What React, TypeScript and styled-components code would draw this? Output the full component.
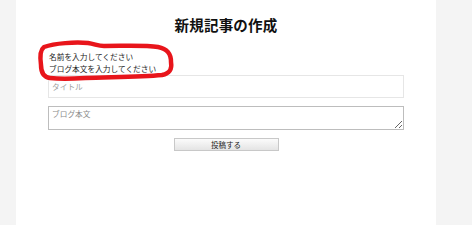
import styled, { createGlobalStyle } from 'styled-components';

const GlobalStyle = createGlobalStyle`
  html, body {
    margin: 0;
    padding: 0;
    background: #ffffff;
  }
  body {
    font-family: "Noto Sans CJK JP", "Noto Sans", sans-serif;
    color: #222;
  }
`;

const PageWrapper = styled.div`
  position: relative;
  display: flex;
  width: 472px;
  height: 225px;
`;

const SideStrip = styled.div<{ $width: number }>`
  width: ${(p) => p.$width}px;
  flex-shrink: 0;
  background: #f4f4f4;
`;

const Main = styled.main`
  width: 420px;
  flex-shrink: 0;
  background: #ffffff;
  display: flex;
  flex-direction: column;
  align-items: center;
  padding-top: 15px;
  box-sizing: border-box;
`;

const Title = styled.h1`
  margin: 0;
  font-size: 14.5px;
  line-height: 20px;
  font-weight: 700;
  color: #111;
  letter-spacing: 0.2px;
`;

const Form = styled.form`
  width: 356px;
  display: flex;
  flex-direction: column;
  margin-top: 16px;
`;

const ErrorList = styled.ul`
  list-style: none;
  margin: 0 0 0 1px;
  padding: 0;
`;

const ErrorItem = styled.li`
  font-size: 7.7px;
  line-height: 12px;
  color: #222;
`;

const TextInput = styled.input`
  box-sizing: border-box;
  width: 100%;
  height: 23px;
  margin: 0;
  padding: 0 3px;
  border: 1px solid #e6e6e6;
  font-family: inherit;
  font-size: 7.7px;
  outline: none;
  &::placeholder {
    color: #a0a0a0;
  }
`;

const TextArea = styled.textarea`
  box-sizing: border-box;
  width: 100%;
  height: 24px;
  margin: 8px 0 0;
  padding: 2px 3px;
  border: 1px solid #bdbdbd;
  font-family: inherit;
  font-size: 7.7px;
  line-height: 10px;
  resize: vertical;
  outline: none;
  &::placeholder {
    color: #8a8a8a;
  }
`;

const SubmitButton = styled.button`
  align-self: center;
  width: 105px;
  height: 13px;
  margin-top: 8px;
  padding: 0;
  border: 1px solid #c8c8c8;
  background: linear-gradient(#fbfbfb, #e4e4e4);
  font-family: inherit;
  font-size: 7.5px;
  line-height: 11px;
  color: #222;
`;

const Annotation = styled.svg`
  position: absolute;
  left: 0;
  top: 0;
  width: 474px;
  height: 227px;
  pointer-events: none;
`;

export default function App() {
  return (
    <>
      <GlobalStyle />
      <PageWrapper>
        <SideStrip $width={16} />
        <Main>
          <Title>新規記事の作成</Title>
          <Form onSubmit={(e) => e.preventDefault()}>
            <ErrorList>
              <ErrorItem>名前を入力してください</ErrorItem>
              <ErrorItem>ブログ本文を入力してください</ErrorItem>
            </ErrorList>
            <TextInput placeholder="タイトル" />
            <TextArea placeholder="ブログ本文" />
            <SubmitButton type="submit">投稿する</SubmitButton>
          </Form>
        </Main>
        <SideStrip $width={36} />
        <Annotation viewBox="0 0 474 227">
          <path
            d="M44 47 C55 43 75 42 88 43 C95 44 98 46 104 46 C125 46 145 45 158 47 C168 49 171 54 171 62 C172 68 171 73 162 75 C140 77 110 77 85 78 C70 79 58 79 50 78 C43 77 41 72 41 65 C40 58 40 50 44 47 Z"
            fill="none"
            stroke="#e8151b"
            strokeWidth="4.5"
            strokeLinejoin="round"
          />
        </Annotation>
      </PageWrapper>
    </>
  );
}
